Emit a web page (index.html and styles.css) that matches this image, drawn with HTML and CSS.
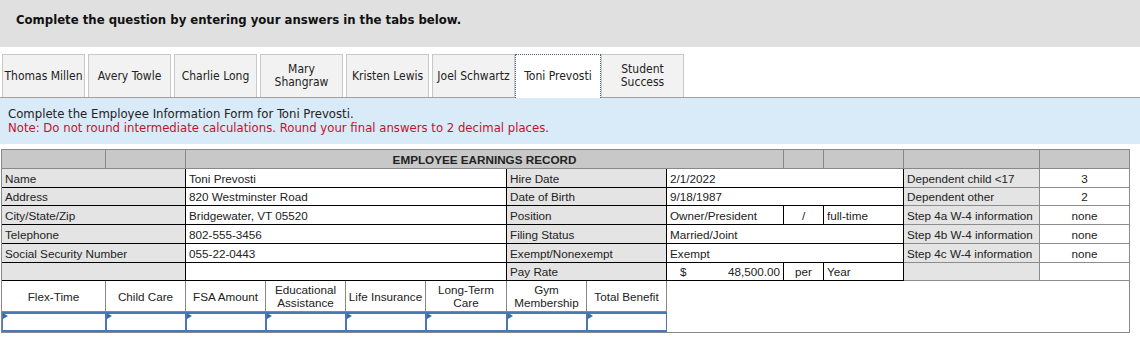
FILE: index.html
```html
<!DOCTYPE html>
<html lang="en">

<head>
  <meta charset="UTF-8">
  <title>Employee Earnings Record</title>
  <link rel="stylesheet" href="styles.css">
</head>

<body>
  <div class="instructions">Complete the question by entering your answers in the tabs below.</div>

  <div class="tabs">
    <div class="tab">Thomas Millen</div>
    <div class="tab">Avery Towle</div>
    <div class="tab">Charlie Long</div>
    <div class="tab">Mary<br>Shangraw</div>
    <div class="tab">Kristen Lewis</div>
    <div class="tab">Joel Schwartz</div>
    <div class="tab active">Toni Prevosti</div>
    <div class="tab">Student<br>Success</div>
  </div>

  <div class="panel">
    <p>Complete the Employee Information Form for Toni Prevosti.</p>
    <p class="note">Note: Do not round intermediate calculations. Round your final answers to 2 decimal places.</p>
  </div>

  <div class="record">
    <!-- title row -->
    <div class="cell head"></div>
    <div class="cell head"></div>
    <div class="cell head title span7">EMPLOYEE EARNINGS RECORD</div>
    <div class="cell head"></div>
    <div class="cell head"></div>
    <div class="cell head"></div>
    <div class="cell head"></div>

    <div class="cell label span2">Name</div>
    <div class="cell value span4">Toni Prevosti</div>
    <div class="cell label span2">Hire Date</div>
    <div class="cell value span3">2/1/2022</div>
    <div class="cell label soft">Dependent child &lt;17</div>
    <div class="cell value soft center">3</div>

    <div class="cell label span2">Address</div>
    <div class="cell value span4">820 Westminster Road</div>
    <div class="cell label span2">Date of Birth</div>
    <div class="cell value span3">9/18/1987</div>
    <div class="cell label soft">Dependent other</div>
    <div class="cell value soft center">2</div>

    <div class="cell label span2">City/State/Zip</div>
    <div class="cell value span4">Bridgewater, VT 05520</div>
    <div class="cell label span2">Position</div>
    <div class="cell value">Owner/President</div>
    <div class="cell value center">/</div>
    <div class="cell value">full-time</div>
    <div class="cell label soft">Step 4a W-4 information</div>
    <div class="cell value soft center">none</div>

    <div class="cell label span2">Telephone</div>
    <div class="cell value span4">802-555-3456</div>
    <div class="cell label span2">Filing Status</div>
    <div class="cell value span3">Married/Joint</div>
    <div class="cell label soft">Step 4b W-4 information</div>
    <div class="cell value soft center">none</div>

    <div class="cell label span2">Social Security Number</div>
    <div class="cell value span4">055-22-0443</div>
    <div class="cell label span2">Exempt/Nonexempt</div>
    <div class="cell value span3">Exempt</div>
    <div class="cell label soft">Step 4c W-4 information</div>
    <div class="cell value soft center">none</div>

    <div class="cell label span2"></div>
    <div class="cell value span4"></div>
    <div class="cell label span2">Pay Rate</div>
    <div class="cell value money"><span>$</span><span>48,500.00</span></div>
    <div class="cell value center">per</div>
    <div class="cell value">Year</div>
    <div class="cell label soft"></div>
    <div class="cell value soft"></div>

    <!-- benefits -->
    <div class="cell benefit">Flex-Time</div>
    <div class="cell benefit">Child Care</div>
    <div class="cell benefit">FSA Amount</div>
    <div class="cell benefit">Educational<br>Assistance</div>
    <div class="cell benefit">Life Insurance</div>
    <div class="cell benefit">Long-Term<br>Care</div>
    <div class="cell benefit">Gym<br>Membership</div>
    <div class="cell benefit">Total Benefit</div>
    <div class="cell blank"></div>

    <div class="entry"><input type="text"></div>
    <div class="entry"><input type="text"></div>
    <div class="entry"><input type="text"></div>
    <div class="entry"><input type="text"></div>
    <div class="entry"><input type="text"></div>
    <div class="entry"><input type="text"></div>
    <div class="entry"><input type="text"></div>
    <div class="entry"><input type="text"></div>
  </div>
</body>

</html>
```

FILE: styles.css
```css
body {
  margin: 0;
  font-family: "DejaVu Sans Condensed", "DejaVu Sans", sans-serif;
  color: #222;
  background-color: #fff;
}

.instructions {
  height: 47px;
  box-sizing: border-box;
  padding: 12px 0 0 16px;
  background-color: #e0e0e0;
  font-size: 13px;
  font-weight: bold;
  color: #111;
}

/* Tabs */
.tabs {
  display: flex;
  gap: 3px;
  margin-top: 7px;
  padding-left: 2px;
  border-bottom: 1px solid #a0a0a0;
}

.tab {
  width: 83px;
  height: 43px;
  box-sizing: border-box;
  border: 1px solid #c8c8c8;
  border-bottom: none;
  background-color: #f2f2f2;
  display: flex;
  align-items: center;
  justify-content: center;
  text-align: center;
  font-size: 12px;
  line-height: 13px;
  color: #222;
  white-space: nowrap;
}

.tab.active {
  width: 86px;
  height: 44px;
  margin: 0 -3px -1px -3px;
  background-color: #fff;
  border: 1px dotted #4a5f86;
  border-bottom: none;
}

/* Instructions panel */
.panel {
  height: 46px;
  box-sizing: border-box;
  padding: 9px 8px 0;
  background-color: #d9eaf8;
  font-size: 13px;
  line-height: 14px;
}

.panel p {
  margin: 0;
}

.panel .note {
  color: #c8102e;
}

/* Earnings record grid */
.record {
  display: grid;
  grid-template-columns: 104px 80px 80px 80px 80px 81px 80px 80px 117px 40px 80px 136px 90px;
  grid-template-rows: 19px 19px 18px 19px 19px 19px 18px 31px 21px;
  width: max-content;
  margin: 5px 0 0 1px;
  border-top: 1px solid #888;
  border-left: 1px solid #888;
  font-family: "Liberation Sans", Arial, sans-serif;
  font-size: 11.7px;
  color: #222;
}

.cell {
  box-sizing: border-box;
  display: flex;
  align-items: center;
  padding: 0 3px;
  border-right: 1px solid #000;
  border-bottom: 1px solid #000;
  white-space: nowrap;
  overflow: hidden;
}

.span2 { grid-column: span 2; }
.span3 { grid-column: span 3; }
.span4 { grid-column: span 4; }
.span7 { grid-column: span 7; }

.head {
  background-color: #c8c8c8;
  border-color: #888;
}

.title {
  justify-content: center;
  font-weight: bold;
}

.label {
  background-color: #e4e4e4;
}

.value {
  background-color: #fff;
}

.soft {
  border-color: #8c8c8c;
}

.center {
  justify-content: center;
}

.money {
  justify-content: space-between;
  padding: 0 3px 0 13px;
}

.benefit {
  justify-content: center;
  text-align: center;
  line-height: 13px;
  border-color: #888;
  background-color: #fff;
}

.blank {
  grid-column: span 5;
  grid-row: span 2;
  border-color: #888;
}

.entry {
  position: relative;
  border-bottom: 1px solid #888;
}

.entry input {
  display: block;
  width: 100%;
  height: 100%;
  box-sizing: border-box;
  margin: 0;
  border: 2px solid #4a78b5;
  border-left-width: 1px;
  border-right-width: 1px;
  background: #fff;
}

.entry::before {
  content: "";
  position: absolute;
  left: 1px;
  top: 1px;
  border-left: 5px solid #3c6db0;
  border-top: 3px solid transparent;
  border-bottom: 3px solid transparent;
}
```
